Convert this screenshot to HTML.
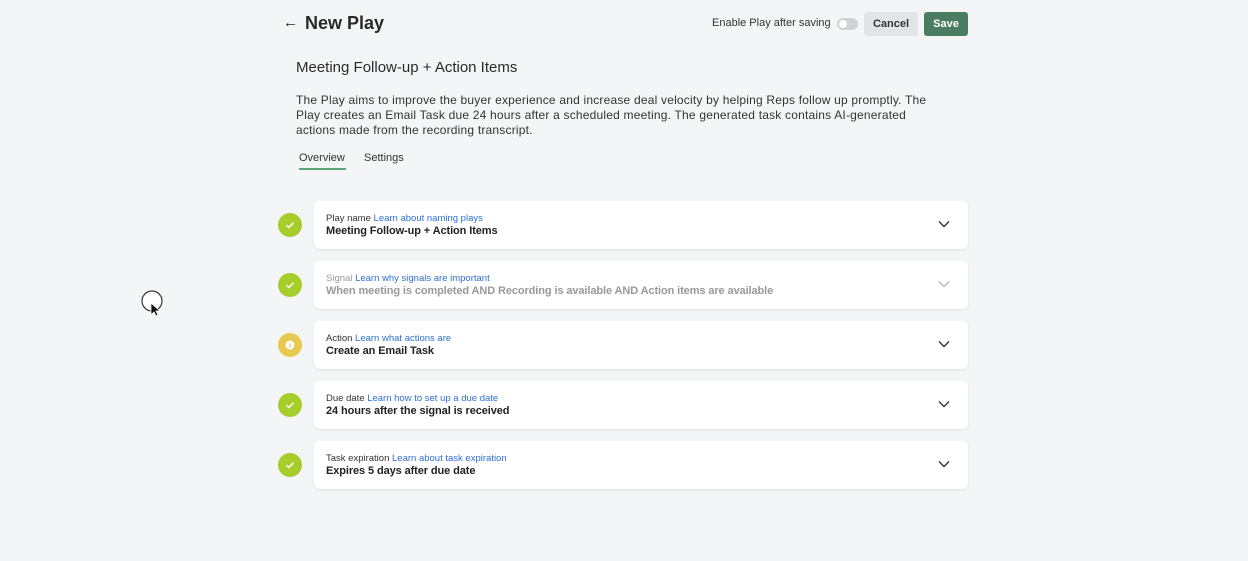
<!DOCTYPE html>
<html><head><style>
*{margin:0;padding:0;box-sizing:border-box}
body{width:1248px;height:561px;background:#f4f5f7;font-family:"Liberation Sans",sans-serif;color:#222;position:relative;overflow:hidden}
.abs{position:absolute}
.card{position:absolute;left:314px;width:654px;height:48px;background:#fff;border-radius:6px;box-shadow:0 1px 2px rgba(0,0,0,.08)}
.card .l{position:absolute;left:12px;top:12px;font-size:9.5px;color:#333}
.card .l a{color:#2f6fd6;text-decoration:none}
.card .v{position:absolute;left:12px;top:24px;font-size:11px;font-weight:bold;color:#222;letter-spacing:-0.1px}
.card svg{position:absolute;right:18px;top:19px}
.dot{position:absolute;left:278px;width:24px;height:24px;border-radius:50%;background:#a6cd2a}
.dot svg{position:absolute;left:6px;top:6px}
</style></head><body>
<div class="abs" style="left:283px;top:14px;font-size:15px">←</div>
<div class="abs" style="left:305px;top:13px;font-size:18px;font-weight:bold;color:#2a2a2a">New Play</div>
<div class="abs" style="left:712px;top:17px;font-size:11px;color:#333">Enable Play after saving</div>
<div class="abs" style="left:837px;top:18px;width:21px;height:12px;border-radius:6px;background:#cfd2d6"><div style="position:absolute;left:2px;top:2px;width:8px;height:8px;border-radius:50%;background:#fff"></div></div>
<div class="abs" style="left:864px;top:12px;width:54px;height:24px;background:#e2e4e7;border-radius:3px;font-size:11px;font-weight:bold;text-align:center;line-height:24px;color:#333">Cancel</div>
<div class="abs" style="left:924px;top:12px;width:44px;height:24px;background:#4a7c5f;border-radius:3px;font-size:11px;font-weight:bold;text-align:center;line-height:24px;color:#fff">Save</div>
<div class="abs" style="left:296px;top:59px;font-size:15px;color:#2a2a2a">Meeting Follow-up + Action Items</div>
<div class="abs" style="left:296px;top:93px;white-space:nowrap;font-size:12px;line-height:15px;color:#333;letter-spacing:0.2px">The Play aims to improve the buyer experience and increase deal velocity by helping Reps follow up promptly. The<br>Play creates an Email Task due 24 hours after a scheduled meeting. The generated task contains AI-generated<br>actions made from the recording transcript.</div>
<div class="abs" style="left:299px;top:152px;font-size:11px;color:#333">Overview</div>
<div class="abs" style="left:299px;top:168px;width:47px;height:2px;background:#5aa676"></div>
<div class="abs" style="left:364px;top:152px;font-size:11px;color:#333">Settings</div>

<div class="dot" style="top:213px"><svg width="12" height="12"><path d="M2.5 6.2l2.3 2.3 4.7-4.7" stroke="#fff" stroke-width="1.4" fill="none"/></svg></div>
<div class="card" style="top:201px"><div class="l">Play name <a>Learn about naming plays</a></div><div class="v">Meeting Follow-up + Action Items</div><svg width="12" height="8"><path d="M1 1.5l5 5 5-5" stroke="#333" stroke-width="1.4" fill="none"/></svg></div>

<div class="dot" style="top:273px"><svg width="12" height="12"><path d="M2.5 6.2l2.3 2.3 4.7-4.7" stroke="#fff" stroke-width="1.4" fill="none"/></svg></div>
<div class="card" style="top:261px"><div class="l" style="color:#999">Signal <a>Learn why signals are important</a></div><div class="v" style="color:#999">When meeting is completed AND Recording is available AND Action items are available</div><svg width="12" height="8"><path d="M1 1.5l5 5 5-5" stroke="#aaa" stroke-width="1.2" fill="none"/></svg></div>

<div class="dot" style="top:333px;background:#e8c94f"><svg width="12" height="12"><circle cx="6" cy="6" r="4.5" fill="#fff"/><rect x="5.4" y="5" width="1.2" height="3.5" fill="#e8c94f"/><rect x="5.4" y="3.2" width="1.2" height="1.1" fill="#e8c94f"/></svg></div>
<div class="card" style="top:321px"><div class="l">Action <a>Learn what actions are</a></div><div class="v">Create an Email Task</div><svg width="12" height="8"><path d="M1 1.5l5 5 5-5" stroke="#333" stroke-width="1.4" fill="none"/></svg></div>

<div class="dot" style="top:393px"><svg width="12" height="12"><path d="M2.5 6.2l2.3 2.3 4.7-4.7" stroke="#fff" stroke-width="1.4" fill="none"/></svg></div>
<div class="card" style="top:381px"><div class="l">Due date <a>Learn how to set up a due date</a></div><div class="v">24 hours after the signal is received</div><svg width="12" height="8"><path d="M1 1.5l5 5 5-5" stroke="#333" stroke-width="1.4" fill="none"/></svg></div>

<div class="dot" style="top:453px"><svg width="12" height="12"><path d="M2.5 6.2l2.3 2.3 4.7-4.7" stroke="#fff" stroke-width="1.4" fill="none"/></svg></div>
<div class="card" style="top:441px"><div class="l">Task expiration <a>Learn about task expiration</a></div><div class="v">Expires 5 days after due date</div><svg width="12" height="8"><path d="M1 1.5l5 5 5-5" stroke="#333" stroke-width="1.4" fill="none"/></svg></div>

<svg class="abs" style="left:140px;top:289px" width="26" height="30"><circle cx="12" cy="12" r="10" fill="#fff" stroke="#333" stroke-width="1.2"/><path d="M11 14l0 12 3-3 2 4 2-1-2-4 4 0z" fill="#111" stroke="#fff" stroke-width="0.8"/></svg>
</body></html>
